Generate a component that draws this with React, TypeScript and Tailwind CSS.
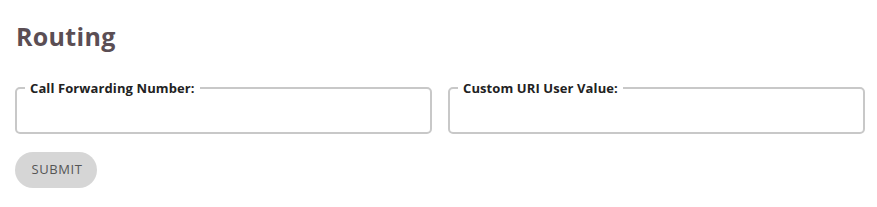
import React from "react";

export default function App() {
  return (
    <div className="w-[877px] h-[207px] bg-white pl-[15px] pr-[12px] pt-[19px]" style={{ fontFamily: '"Open Sans", "Liberation Sans", sans-serif' }}>
      <h1 className="text-[25px] leading-[34px] font-bold text-[#5b4e54] pl-[1px] tracking-[0.3px]">Routing</h1>
      <div className="mt-[28px] flex gap-[16px]">
        <fieldset className="w-[417px] shrink-0 h-[53px] border-2 border-[#c8c8c8] rounded-[5px] px-[8px] pb-0 pt-0 m-0">
          <legend className="px-[5px] text-[13px] leading-[14px] font-bold text-[#222222] tracking-[0.1px]">Call Forwarding Number:</legend>
          <input className="w-full h-[30px] outline-none bg-transparent" />
        </fieldset>
        <fieldset className="w-[417px] shrink-0 h-[53px] border-2 border-[#c8c8c8] rounded-[5px] px-[8px] pb-0 pt-0 m-0">
          <legend className="px-[5px] text-[13px] leading-[14px] font-bold text-[#222222] tracking-[0.1px]">Custom URI User Value:</legend>
          <input className="w-full h-[30px] outline-none bg-transparent" />
        </fieldset>
      </div>
      <button className="mt-[18px] w-[82px] h-[36px] rounded-full bg-[#d6d6d6] pl-[2px] text-[13px] text-[#555555] tracking-[0.6px]">SUBMIT</button>
    </div>
  );
}
